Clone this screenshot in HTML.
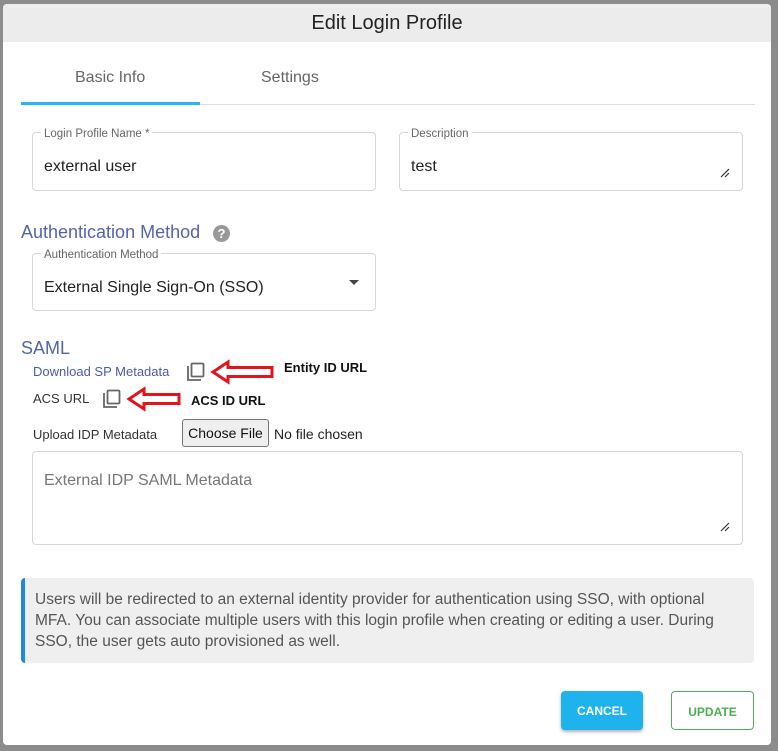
<!DOCTYPE html>
<html><head><style>
*{box-sizing:border-box;margin:0;padding:0}
body{width:778px;height:751px;background:#8c8c8c;font-family:"Liberation Sans",Arial,sans-serif;position:relative;overflow:hidden}
.m{position:absolute;left:3px;top:4px;width:768px;height:741px;background:#fff;border-radius:4px;overflow:hidden}
.hd{height:38px;background:#ececec;text-align:center;font-size:20px;line-height:38px;color:#222}
.a{position:absolute}
.tab{font-size:16px;color:#666;top:65px}
.box{position:absolute;border:1px solid #d6d6d6;border-radius:4px}
.lbl{position:absolute;top:-5px;left:8px;background:#fff;padding:0 3px;font-size:11.5px;line-height:12px;color:#666}
.val{position:absolute;left:11px;font-size:16px;color:#222}
.sec{font-size:18px;color:#5563a8}
.sm{font-size:13px;color:#333}
</style></head><body>
<div class="m">
<div class="hd">Edit Login Profile</div>
<div class="a tab" style="left:72px">Basic Info</div>
<div class="a tab" style="left:258px">Settings</div>
<div class="a" style="left:18px;top:100px;width:734px;height:1px;background:#ddd"></div>
<div class="a" style="left:18px;top:98px;width:179px;height:3px;background:#29b6f6"></div>

<div class="box" style="left:29px;top:128px;width:344px;height:59px"><span class="lbl">Login Profile Name *</span><span class="val" style="top:25px">external user</span></div>
<div class="box" style="left:396px;top:128px;width:344px;height:59px"><span class="lbl">Description</span><span class="val" style="top:25px">test</span>
<svg style="position:absolute;right:12px;bottom:12px" width="10" height="10"><path d="M1 9L9 1M5 9L9 5" stroke="#333" stroke-width="1.2"/></svg></div>

<div class="a sec" style="left:18px;top:218px">Authentication Method</div>
<div class="a" style="left:210px;top:221px;width:17px;height:17px;border-radius:50%;background:#999;color:#fff;font-size:13px;font-weight:bold;text-align:center;line-height:17px">?</div>
<div class="box" style="left:29px;top:249px;width:344px;height:58px"><span class="lbl">Authentication Method</span><span class="val" style="top:25px">External Single Sign-On (SSO)</span>
<svg style="position:absolute;right:16px;top:26px" width="10" height="5"><path d="M0 0H10L5 5Z" fill="#444"/></svg></div>

<div class="a sec" style="left:18px;top:334px">SAML</div>
<div class="a sm" style="left:30px;top:360px;color:#4a5ab0">Download SP Metadata</div>
<svg class="a" style="left:182px;top:358px" width="22" height="22"><path d="M3 4V18H16" fill="none" stroke="#666" stroke-width="1.8"/><rect x="6.5" y="1.5" width="12" height="13" fill="none" stroke="#666" stroke-width="1.8" rx="1"/></svg>
<svg class="a" style="left:207px;top:355px" width="64" height="26"><path d="M3 13L18 3V8.5H62V17.5H18V23Z" fill="#fff" stroke="#e0151d" stroke-width="3"/></svg>
<div class="a" style="left:281px;top:356px;font-size:13px;font-weight:bold;color:#111">Entity ID URL</div>
<div class="a sm" style="left:30px;top:387px">ACS URL</div>
<svg class="a" style="left:98px;top:385px" width="22" height="22"><path d="M3 4V18H16" fill="none" stroke="#666" stroke-width="1.8"/><rect x="6.5" y="1.5" width="12" height="13" fill="none" stroke="#666" stroke-width="1.8" rx="1"/></svg>
<svg class="a" style="left:123px;top:382px" width="56" height="26"><path d="M3 13L18 3V8.5H53V17.5H18V23Z" fill="#fff" stroke="#e0151d" stroke-width="3"/></svg>
<div class="a" style="left:188px;top:389px;font-size:13px;font-weight:bold;color:#111">ACS ID URL</div>
<div class="a sm" style="left:30px;top:423px">Upload IDP Metadata</div>
<div class="a" style="left:179px;top:415px;width:87px;height:28px;background:#efefef;border:1px solid #767676;border-radius:3px;font-size:14px;color:#111;text-align:center;line-height:26px">Choose File</div>
<div class="a" style="left:271px;top:422px;font-size:14px;color:#222">No file chosen</div>
<div class="box" style="left:29px;top:447px;width:711px;height:94px"><span class="val" style="top:20px;color:#777">External IDP SAML Metadata</span>
<svg style="position:absolute;right:12px;bottom:12px" width="10" height="10"><path d="M1 9L9 1M5 9L9 5" stroke="#333" stroke-width="1.2"/></svg></div>

<div class="a" style="left:18px;top:574px;width:733px;height:85px;background:#efefef;border-left:4px solid #1e88e5;border-radius:4px;padding:11px 10px;font-size:15.5px;line-height:21px;color:#555">Users will be redirected to an external identity provider for authentication using SSO, with optional MFA. You can associate multiple users with this login profile when creating or editing a user. During SSO, the user gets auto provisioned as well.</div>

<div class="a" style="left:558px;top:687px;width:82px;height:39px;background:#1eb3ec;border-radius:4px;color:#fff;font-size:12px;font-weight:bold;text-align:center;line-height:41px;box-shadow:0 2px 3px rgba(0,0,0,.3)">CANCEL</div>
<div class="a" style="left:668px;top:687px;width:83px;height:39px;border:1px solid #4caf50;border-radius:4px;color:#4caf50;font-size:12px;font-weight:bold;text-align:center;line-height:41px">UPDATE</div>
</div>
</body></html>
